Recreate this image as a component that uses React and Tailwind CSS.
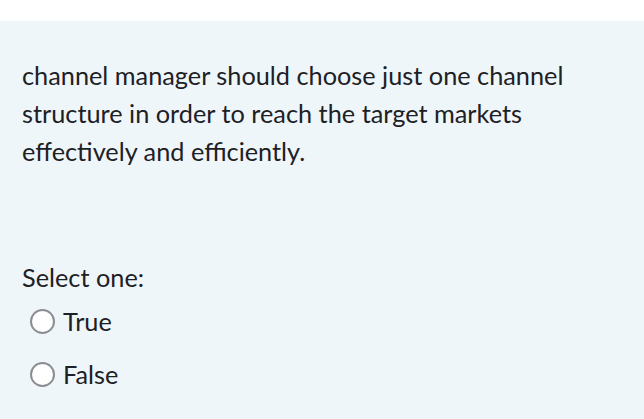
import React from 'react';

const Radio = ({ label }) => (
  <label className="flex items-center gap-[8px] h-[53px]">
    <span className="w-[25px] h-[25px] rounded-full border-[2px] border-[#8a8d91] bg-white shrink-0" />
    <span>{label}</span>
  </label>
);

const App = () => {
  return (
    <div className="w-[644px] h-[419px] bg-white overflow-hidden" style={{ fontFamily: 'Lato, "Liberation Sans", sans-serif' }}>
      <div className="mt-[21px] h-[398px] bg-[#eff6fa] text-[#1d2125] text-[25.3px] px-[22px] pt-[35px]">
        <p className="leading-[38px]">
          channel manager should choose just one channel structure in order to reach the target markets effectively and efficiently.
        </p>
        <p className="leading-[38px] mt-[88px]">Select one:</p>
        <div className="pl-[8px] mt-[-1px]">
          <Radio label="True" />
          <Radio label="False" />
        </div>
      </div>
    </div>
  );
};

export default App;
